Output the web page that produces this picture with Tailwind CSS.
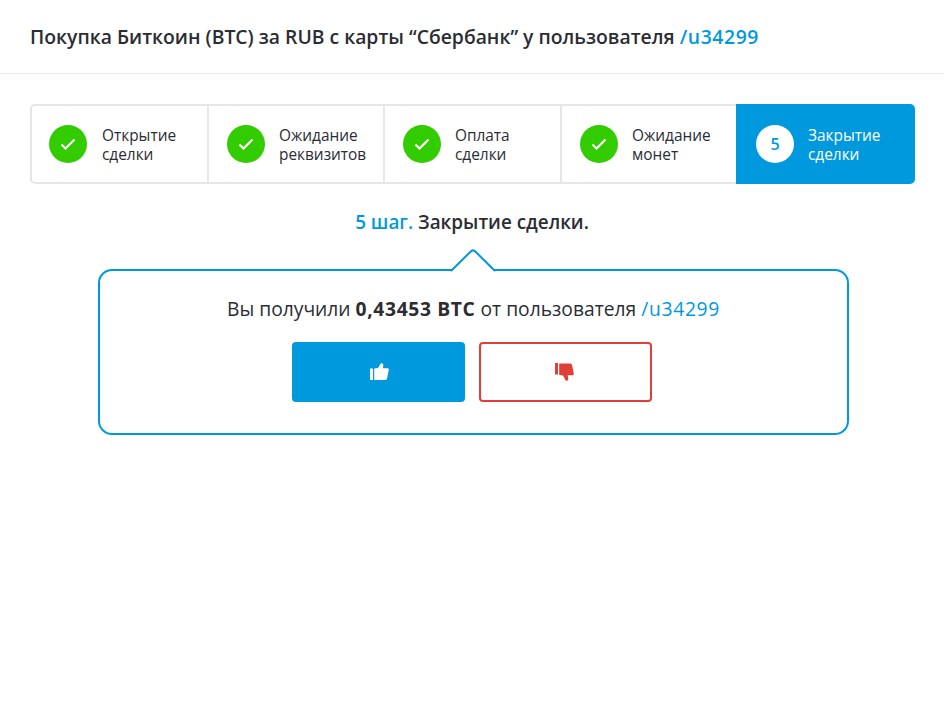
<!DOCTYPE html>
<html lang="en">
<head>
  <meta charset="UTF-8" />
  <title>Сделка</title>
  <script src="https://cdn.jsdelivr.net/npm/@tailwindcss/browser@4"></script>
</head>
<body class="bg-white min-h-screen font-['Open_Sans',sans-serif] text-[#2b2d33]">

  <!-- Header -->
  <header class="h-[74px] border-b border-[#e8e8e8] pl-[30px] flex items-center">
    <h1 class="text-[19.35px] font-semibold">Покупка Биткоин (BTC) за RUB с карты “Сбербанк” у пользователя <a href="#" class="text-[#0099dd] tracking-[0.6px]">/u34299</a></h1>
  </header>

  <!-- Steps -->
  <div class="mt-[30px] mx-[30px] w-[885px] h-[80px] flex text-[15.4px] leading-[19px]">
    <div class="w-[179px] flex items-center pl-[17px] border-2 border-[#e6e6e6] rounded-l-[5px]">
      <span class="w-[38px] h-[38px] rounded-full bg-[#33cc00] flex items-center justify-center shrink-0">
        <svg width="16" height="12" viewBox="0 0 16 12" fill="none" stroke="white" stroke-width="2.2"><path d="M1.5 6.5l4 4 9-9" /></svg>
      </span>
      <span class="ml-[15px] pt-[1px]">Открытие<br />сделки</span>
    </div>
    <div class="w-[176px] flex items-center pl-[18px] border-y-2 border-r-2 border-[#e6e6e6]">
      <span class="w-[38px] h-[38px] rounded-full bg-[#33cc00] flex items-center justify-center shrink-0">
        <svg width="16" height="12" viewBox="0 0 16 12" fill="none" stroke="white" stroke-width="2.2"><path d="M1.5 6.5l4 4 9-9" /></svg>
      </span>
      <span class="ml-[14px] pt-[1px]">Ожидание<br />реквизитов</span>
    </div>
    <div class="w-[177px] flex items-center pl-[18px] border-y-2 border-r-2 border-[#e6e6e6]">
      <span class="w-[38px] h-[38px] rounded-full bg-[#33cc00] flex items-center justify-center shrink-0">
        <svg width="16" height="12" viewBox="0 0 16 12" fill="none" stroke="white" stroke-width="2.2"><path d="M1.5 6.5l4 4 9-9" /></svg>
      </span>
      <span class="ml-[14px] pt-[1px]">Оплата<br />сделки</span>
    </div>
    <div class="w-[174px] flex items-center pl-[18px] border-y-2 border-[#e6e6e6]">
      <span class="w-[38px] h-[38px] rounded-full bg-[#33cc00] flex items-center justify-center shrink-0">
        <svg width="16" height="12" viewBox="0 0 16 12" fill="none" stroke="white" stroke-width="2.2"><path d="M1.5 6.5l4 4 9-9" /></svg>
      </span>
      <span class="ml-[14px] pt-[1px]">Ожидание<br />монет</span>
    </div>
    <div class="w-[179px] flex items-center pl-[20px] bg-[#0099dd] rounded-r-[5px] text-white">
      <span class="w-[38px] h-[38px] rounded-full bg-white text-[#0099dd] text-[16px] font-semibold flex items-center justify-center shrink-0">5</span>
      <span class="ml-[14px] pt-[1px]">Закрытие<br />сделки</span>
    </div>
  </div>

  <!-- Step title -->
  <p class="mt-[26px] text-center text-[18.9px] leading-[24px] font-semibold"><span class="text-[#0099dd]">5 шаг.</span> Закрытие сделки.</p>

  <!-- Confirm box -->
  <div class="relative mt-[35px] ml-[98px] w-[751px] h-[166px] border-2 border-[#0099dd] rounded-[14px] flex flex-col items-center">
    <svg class="absolute left-[349px] top-[-23px]" width="48" height="25" viewBox="0 0 48 25" fill="none">
      <path d="M2 23L22 3.2q2-1.7 4 0L46 23" fill="white" stroke="#0099dd" stroke-width="2" />
      <path d="M4 23.5h40v1.5H4z" fill="white" />
    </svg>
    <p class="mt-[25px] text-[19.25px] leading-[26px]">Вы получили <span class="font-bold tracking-[0.64px]">0,43453 BTC</span> от пользователя <a href="#" class="text-[#0099dd] tracking-[0.7px]">/u34299</a></p>
    <div class="mt-[20px] mr-[4px] flex gap-[14px]">
      <button class="w-[173px] h-[60px] rounded-[4px] bg-[#0099dd] flex items-center justify-center">
        <svg class="ml-[3px] mt-[-1px]" width="19" height="17" viewBox="0 0 19 17" fill="white"><path d="M0 5.5h3V17H0zM4.2 5.5L8 5 10.5 .8Q11.5 0 12.6 .5 13.8 1.5 13.2 3.4L12.6 5.2H17.8Q19 5.4 18.8 6.8L17 15.5Q16.7 17 15.2 17H4.2z" /></svg>
      </button>
      <button class="w-[173px] h-[60px] rounded-[4px] border-2 border-[#e03e36] bg-white flex items-center justify-center">
        <svg class="mr-[2px] mt-[-1px]" width="19" height="18" viewBox="0 0 19 18" fill="#e03e36"><path d="M0 0h3v11.5H0zM4.2 .5H15.2Q16.7 .5 17 2L18.8 10.5Q19 12 17.8 12.2H12.6L13.2 14.6Q13.8 16.5 12.6 17.5 11.5 18 10.5 17.2L8 12.5 4.2 12z" /></svg>
      </button>
    </div>
  </div>

</body>
</html>
